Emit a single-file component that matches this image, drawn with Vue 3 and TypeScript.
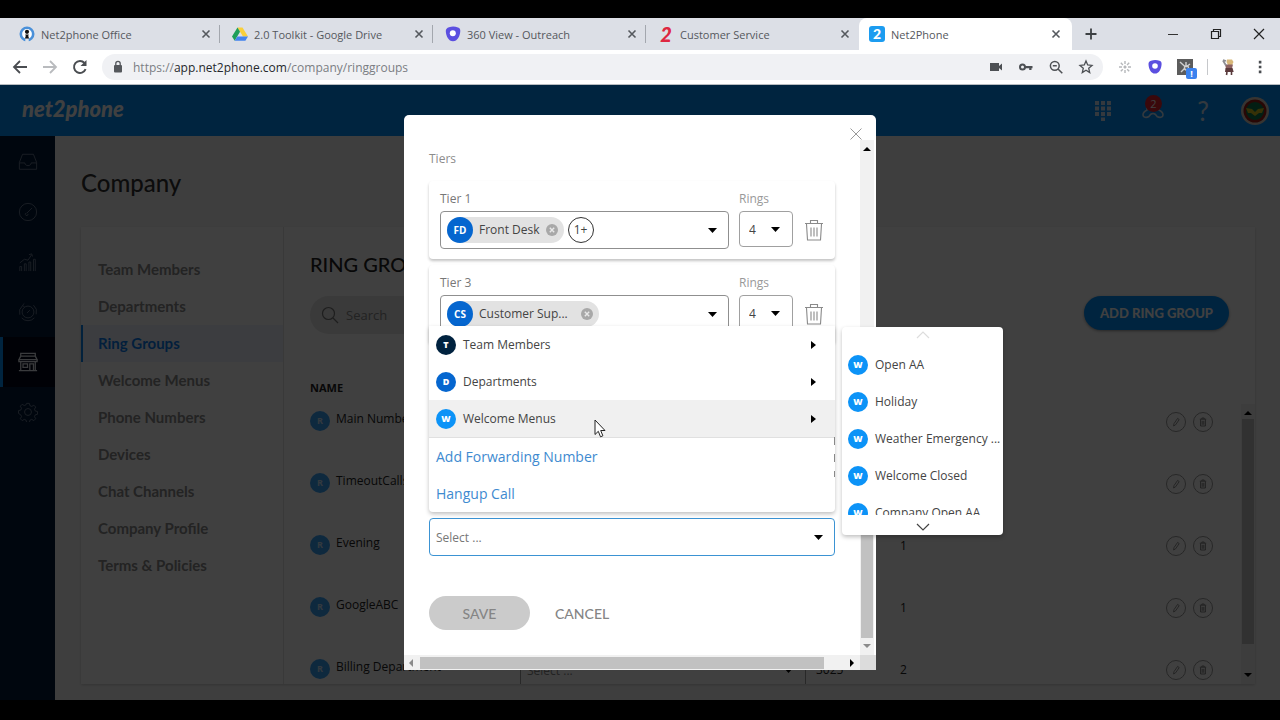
<script setup lang="ts">
interface Tab { title: string; icon: 'office' | 'drive' | 'outreach' | 'service' | 'phone'; active?: boolean }
interface Tier { label: string; initials: string; name: string; extra?: string; rings: string }
interface GroupRow { name: string; ext: string; count: string }
interface MenuItem { letter: string; label: string; tone: string; hover?: boolean }

const tabs: Tab[] = [
  { title: 'Net2phone Office', icon: 'office' },
  { title: '2.0 Toolkit - Google Drive', icon: 'drive' },
  { title: '360 View - Outreach', icon: 'outreach' },
  { title: 'Customer Service', icon: 'service' },
  { title: 'Net2Phone', icon: 'phone', active: true },
]
const rail = ['Inbox', 'Dashboard', 'Reports', 'History', 'Company', 'Settings']
const sections = ['Team Members', 'Departments', 'Ring Groups', 'Welcome Menus', 'Phone Numbers', 'Devices', 'Chat Channels', 'Company Profile', 'Terms & Policies']
const rows: GroupRow[] = [
  { name: 'Main Number', ext: '', count: '' },
  { name: 'TimeoutCalls', ext: '', count: '' },
  { name: 'Evening', ext: '', count: '1' },
  { name: 'GoogleABC', ext: '', count: '1' },
  { name: 'Billing Department', ext: '3025', count: '2' },
]
const tiers: Tier[] = [
  { label: 'Tier 1', initials: 'FD', name: 'Front Desk', extra: '1+', rings: '4' },
  { label: 'Tier 3', initials: 'CS', name: 'Customer Sup...', rings: '4' },
]
const menu: MenuItem[] = [
  { letter: 'T', label: 'Team Members', tone: 'navy' },
  { letter: 'D', label: 'Departments', tone: 'blue' },
  { letter: 'W', label: 'Welcome Menus', tone: 'sky', hover: true },
]
const welcomeMenus = ['Open AA', 'Holiday', 'Weather Emergency ...', 'Welcome Closed', 'Company Open AA']
</script>

<template>
  <div class="screen">
    <header class="browser">
      <div class="tabstrip">
        <div class="tabs">
          <div v-for="t in tabs" :key="t.title" class="tab" :class="{ active: t.active }">
            <svg v-if="t.icon === 'office'" class="fav" viewBox="0 0 16 16"><circle cx="8" cy="8" r="6.2" fill="#fff" stroke="#4a90d9" stroke-width="2.6" /><rect x="6.3" y="10" width="3.4" height="6" fill="#dde1e8" /><circle cx="8" cy="5.8" r="2.1" fill="#111" /><path d="M6.200 8.500h3.600L9.200 10l.9 2.600H5.900L6.800 10z" fill="#111" /></svg>
            <svg v-else-if="t.icon === 'drive'" class="fav" viewBox="0 0 16 16"><path d="M5.500 1.500h5L16 10.500h-5z" fill="#f9cf3a" /><path d="M5.500 1.500 8 5.800 2.700 14.800 0 10.500z" fill="#1e9e5a" /><path d="M5.300 10.500H16l-2.600 4.300H2.700z" fill="#4383ee" /></svg>
            <svg v-else-if="t.icon === 'outreach'" class="fav" viewBox="0 0 16 16"><path d="M4 1.200C7 .3 10 .4 13 1.400c1.700.6 2.400 1.800 2.300 3.600C15 10 12.500 15.300 8 15.300S1 10 .8 5C.7 3.100 2 1.800 4 1.200z" fill="#5b4fe0" /><circle cx="7.800" cy="7.200" r="3" fill="#fff" /></svg>
            <span v-else-if="t.icon === 'service'" class="fav fav-red">2</span>
            <span v-else class="fav fav-blue">2</span>
            <span class="tab-title">{{ t.title }}</span>
            <button class="icon-btn tab-close" :aria-label="'Close ' + t.title"><svg width="10" height="10" viewBox="0 0 10 10"><path d="M1.500 1.500l7 7M8.500 1.500l-7 7" stroke="#55595e" stroke-width="1.600" /></svg></button>
          </div>
        </div>
        <button class="icon-btn plus" aria-label="New tab"><svg width="12" height="12" viewBox="0 0 12 12"><path d="M6 .5v11M.5 6h11" stroke="#3c4043" stroke-width="1.800" /></svg></button>
        <div class="win">
          <button class="icon-btn" aria-label="Minimize"><svg width="12" height="12" viewBox="0 0 12 12"><path d="M1 6.500h10" stroke="#333" /></svg></button>
          <button class="icon-btn" aria-label="Restore"><svg width="12" height="12" viewBox="0 0 12 12"><path d="M1.500 3.500h7v7h-7zM3.500 3.500v-2h7v7h-2" fill="none" stroke="#222" stroke-width="1.200" /></svg></button>
          <button class="icon-btn" aria-label="Close window"><svg width="12" height="12" viewBox="0 0 12 12"><path d="M1 1l10 10M11 1L1 11" stroke="#222" stroke-width="1.200" /></svg></button>
        </div>
      </div>
      <div class="toolbar">
        <div class="nav">
          <button class="icon-btn" aria-label="Back"><svg width="16" height="16" viewBox="0 0 16 16"><path d="M15 8H2.500M8 2L2 8l6 6" fill="none" stroke="#4a4d51" stroke-width="1.800" /></svg></button>
          <button class="icon-btn" aria-label="Forward"><svg width="16" height="16" viewBox="0 0 16 16"><path d="M1 8h12.500M8 2l6 6-6 6" fill="none" stroke="#b9bbbe" stroke-width="1.800" /></svg></button>
          <button class="icon-btn" aria-label="Reload"><svg width="16" height="16" viewBox="0 0 16 16"><path d="M13.600 10.200A6 6 0 1 1 12.500 4" fill="none" stroke="#4a4d51" stroke-width="1.900" /><path d="M14.500 1v6h-6z" fill="#4a4d51" /></svg></button>
        </div>
        <div class="omnibox">
          <svg width="10" height="14" viewBox="0 0 10 14"><rect x="1" y="5" width="8" height="7.500" rx="1" fill="#55585c" /><path d="M2.800 5.500V3.600a2.200 2.200 0 0 1 4.400 0v1.900" fill="none" stroke="#55585c" stroke-width="1.300" /></svg>
          <span class="url">https://<b>app.net2phone.com</b>/company/ringgroups</span>
          <div class="omni-icons">
            <svg width="16" height="16" viewBox="0 0 16 16"><path d="M2 4h9v3l3-2.500v7L11 9v3H2z" fill="#4d5054" /></svg>
            <svg width="16" height="16" viewBox="0 0 16 16"><circle cx="4.500" cy="8" r="2.500" fill="none" stroke="#4d5054" stroke-width="2" /><path d="M7 7h7.500v2.200h-1V11h-2.300V9.200H7z" fill="#4d5054" /></svg>
            <svg width="16" height="16" viewBox="0 0 16 16"><circle cx="6.800" cy="6.800" r="4.400" fill="none" stroke="#4d5054" stroke-width="1.500" /><path d="M10 10l4.300 4.300M4.800 6.800h4" stroke="#4d5054" stroke-width="1.500" /></svg>
            <svg width="16" height="16" viewBox="0 0 16 16"><path d="M8 2l1.700 4 4.300.4-3.300 2.800 1 4.300L8 11.200l-3.700 2.300 1-4.300L2 6.400 6.300 6z" fill="none" stroke="#4d5054" stroke-width="1.300" /></svg>
          </div>
        </div>
        <div class="exts">
          <svg width="16" height="16" viewBox="0 0 16 16"><path d="M8 2v12M2 8h12M3.800 3.800l8.400 8.400M12.200 3.800l-8.400 8.400" stroke="#b5b7ba" stroke-width="1.400" stroke-dasharray="3 1.500" /></svg>
          <svg width="16" height="16" viewBox="0 0 16 16"><path d="M4 1.700C7 .8 10 .9 12.500 1.800c1.700.6 2.200 1.800 2.100 3.400C14.300 10 12 14.600 8 14.600S1.700 10 1.500 5.200C1.400 3.300 2.300 2.200 4 1.700z" fill="#5b4fe0" /><circle cx="8" cy="7" r="2.800" fill="#fff" /></svg>
          <span class="hub">
            <svg width="16" height="16" viewBox="0 0 16 16"><rect width="16" height="16" fill="#5c5c5c" /><path d="M3 3l5.500 5M9 3v5M9 8l4-3M8 9l-4 4" stroke="#d0d0d0" stroke-width="1.400" /><circle cx="9.500" cy="9" r="2" fill="none" stroke="#d0d0d0" stroke-width="1.400" /></svg>
            <i class="hub-badge">!</i>
          </span>
          <span class="vsep"></span>
          <svg class="figure" width="14" height="18" viewBox="0 0 14 18"><path d="M5 1.500h5l1.500 2.500L10 7H6L4.500 4z" fill="#d8b779" /><path d="M3 6.500h8l-1 4H4z" fill="#8d6262" /><path d="M3.500 10h7l1.200 4H3z" fill="#5c3a3c" /><path d="M1 2.500l3 5M1 2l3 1" stroke="#8f8f95" stroke-width="1.800" /><path d="M5 14l-.5 3M9.500 14v3" stroke="#57393a" stroke-width="1.600" /></svg>
          <svg width="4" height="16" viewBox="0 0 4 16"><path d="M.8 1.800h2.600v2.600H.8zM.8 6.700h2.600v2.600H.8zM.8 11.600h2.600v2.600H.8z" fill="#4a4d51" /></svg>
        </div>
      </div>
    </header>

    <div class="page">
      <div class="topbar">
        <span class="logo">net2phone</span>
        <div class="top-icons">
          <button class="icon-btn pad" aria-label="Dial pad"><svg width="16" height="20" viewBox="0 0 16 20"><path d="M0 0h4v4H0zM6 0h4v4H6zM12 0h4v4h-4zM0 5.500h4v4H0zM6 5.500h4v4H6zM12 5.500h4v4h-4zM0 11h4v4H0zM6 11h4v4H6zM12 11h4v4h-4zM6 16.500h4v3.500H6z" fill="#cfe4f7" /></svg></button>
          <button class="icon-btn bell" aria-label="Notifications"><svg width="22" height="16" viewBox="0 0 22 16"><path d="M5 4v3C3 8 1 10 1 12c0 2.500 3.500 3 6 1.500 1-2 2.500-3 4-3s3 1 4 3c2.500 1.500 6 1 6-1.500 0-2-2-4-4-5V4" fill="none" stroke="#cfe4f7" stroke-width="1.600" /></svg><i class="count">2</i></button>
          <button class="icon-btn help" aria-label="Help">?</button>
          <svg width="28" height="28" viewBox="0 0 28 28"><circle cx="14" cy="14" r="14" fill="#d9d0c4" /><circle cx="14" cy="14" r="11.500" fill="#a01e14" /><circle cx="14" cy="14" r="9" fill="#0d7a4c" /><path d="M5 11l6 1 3 3 3-3 6-1-2 5h-3l-4 3-4-3H7z" fill="#d8c21e" /></svg>
        </div>
      </div>

      <div class="body">
        <nav class="rail">
          <button v-for="(r, i) in rail" :key="r" class="rail-btn" :class="{ active: i === 4 }" :aria-label="r">
            <svg v-if="i === 0" viewBox="0 0 22 22"><path d="M5 2.500h12l3.500 9V19h-19v-7.500zM1.500 12h6c0 4 7 4 7 0h6" /></svg>
            <svg v-else-if="i === 1" viewBox="0 0 22 22"><circle cx="11" cy="11" r="9.500" /><path d="M9.500 12.500l6-6M9 12a1.500 1.500 0 1 0 2 1" /></svg>
            <svg v-else-if="i === 2" viewBox="0 0 22 22"><path d="M2 21v-5h2v5M7 21v-8h2v8M12 21V11h2v10M17 21V8h2v13M2 12l5-4 4 1 4-6M12 3l3-1 1 3" /></svg>
            <svg v-else-if="i === 3" viewBox="0 0 22 22"><circle cx="11" cy="11" r="6.500" /><path d="M10 12l3-3M2 14a9.500 9.500 0 0 1 3-10M17 3.500a9.500 9.500 0 0 1 3 10M4 17.500a9.500 9.500 0 0 0 14 0M7 1.500l-2 2 2 2" /></svg>
            <svg v-else-if="i === 4" viewBox="0 0 22 22"><path d="M3 1.500h16v3H3zM3 4.500l-2 4h20l-2-4M1 8.500h20v2H1zM3 10.500V20M19 10.500V20M1 20.500h20M5.500 13h5v4h-5zM13 20v-7h4v7" /></svg>
            <svg v-else viewBox="0 0 22 22"><circle cx="11" cy="11" r="3.800" /><path d="M9.500 1.500h3l.6 2.500 2 .9 2.300-1.400 2.100 2.100-1.400 2.300.9 2 2.500.6v3l-2.500.6-.9 2 1.400 2.300-2.100 2.100-2.300-1.400-2 .9-.6 2.500h-3l-.6-2.500-2-.9-2.300 1.400-2.100-2.100 1.400-2.300-.9-2L.5 12.500v-3L3 8.900l.9-2-1.400-2.300 2.100-2.100 2.300 1.400 2-.9z" /></svg>
          </button>
        </nav>
        <main class="main">
          <h1>Company</h1>
          <div class="panel">
            <nav class="sections">
              <a v-for="s in sections" :key="s" href="#" :class="{ current: s === 'Ring Groups' }">{{ s }}</a>
            </nav>
            <section class="content">
              <h2>RING GROUPS</h2>
              <div class="tools">
                <label class="search">
                  <svg width="18" height="18" viewBox="0 0 18 18"><circle cx="7.500" cy="7.500" r="6" fill="none" stroke="#777" stroke-width="1.200" /><path d="M12 12l5 5" stroke="#777" stroke-width="1.200" /></svg>
                  <input type="text" placeholder="Search" aria-label="Search ring groups" />
                </label>
                <button class="add">ADD RING GROUP</button>
              </div>
              <div class="scroll">
                <div class="clip">
                  <table>
                    <colgroup><col class="c-name" /><col class="c-sel" /><col class="c-ext" /><col class="c-count" /><col /></colgroup>
                    <thead><tr><th>NAME</th><th></th><th></th><th></th><th></th></tr></thead>
                    <tbody>
                      <tr v-for="r in rows" :key="r.name">
                        <td class="name"><div><i class="avatar">R</i><span>{{ r.name }}</span></div></td>
                        <td class="sel"><div class="picker"><select :aria-label="'Members of ' + r.name"><option>Select ...</option></select><svg class="caret" width="9" height="5" viewBox="0 0 9 5"><path d="M0 0h9L4.500 5z" /></svg></div></td>
                        <td class="num">{{ r.ext }}</td>
                        <td class="num">{{ r.count }}</td>
                        <td class="acts">
                          <div>
                            <button class="round" :aria-label="'Edit ' + r.name"><svg width="8" height="10" viewBox="0 0 10 12"><path d="M2 11l.5-3L7 1.500l2 1.500-4.500 6.500z" fill="none" stroke="#777" /></svg></button>
                            <button class="round" :aria-label="'Delete ' + r.name"><svg width="8" height="10" viewBox="0 0 10 12"><path d="M1 2.500h8M3.500 2V1h3v1M2 3v8h6V3M4 4.500v5M6 4.500v5" fill="none" stroke="#666" /></svg></button>
                          </div>
                        </td>
                      </tr>
                    </tbody>
                  </table>
                </div>
                <div class="vbar outer">
                  <svg width="8" height="4" viewBox="0 0 8 4"><path d="M0 4h8L4 0z" /></svg>
                  <span class="thumb"></span>
                  <svg width="8" height="4" viewBox="0 0 8 4"><path d="M0 0h8L4 4z" /></svg>
                </div>
              </div>
            </section>
          </div>
        </main>
      </div>

      <div class="overlay">
        <div class="modal" role="dialog" aria-label="Tiers">
          <div class="modal-head">
            <button class="icon-btn" aria-label="Close"><svg width="12" height="12" viewBox="0 0 12 12"><path d="M.5.5l11 11M11.500.5l-11 11" stroke="#999" /></svg></button>
          </div>
          <div class="modal-mid">
            <div class="form">
              <p class="tiers-title">Tiers</p>
              <div v-for="t in tiers" :key="t.label" class="tier">
                <div class="tier-main">
                  <span class="lbl">{{ t.label }}</span>
                  <button class="combo" :aria-label="t.label + ' members'">
                    <span class="chip" :class="{ long: !t.extra }"><i class="initials">{{ t.initials }}</i><span>{{ t.name }}</span>
                      <svg width="12" height="12" viewBox="0 0 12 12"><circle cx="6" cy="6" r="6" fill="#a8a8a8" /><path d="M3.800 3.800l4.400 4.400M8.200 3.800L3.800 8.200" stroke="#e8e8e8" stroke-width="1.400" /></svg>
                    </span>
                    <span v-if="t.extra" class="extra">{{ t.extra }}</span>
                    <svg class="caret" width="9" height="5" viewBox="0 0 9 5"><path d="M0 0h9L4.500 5z" /></svg>
                  </button>
                </div>
                <label class="rings">
                  <span class="lbl light">Rings</span>
                  <span class="picker"><select><option>{{ t.rings }}</option></select><svg class="caret" width="9" height="5" viewBox="0 0 9 5"><path d="M0 0h9L4.500 5z" /></svg></span>
                </label>
                <button class="icon-btn trash" :aria-label="'Delete ' + t.label"><svg width="20" height="22" viewBox="0 0 20 22"><path d="M1 4.500h18M6.500 4V1.500h7V4M2.500 5l1 16h13l1-16M7 8.500v9M10 8.500v9M13 8.500v9" fill="none" stroke="#8a8a8a" stroke-width="1.100" /></svg></button>
              </div>

              <div class="field">
                <div class="menu">
                  <button v-for="m in menu" :key="m.label" class="item" :class="{ hover: m.hover }">
                    <i class="dot" :class="m.tone">{{ m.letter }}</i><span>{{ m.label }}</span>
                    <svg width="5" height="8" viewBox="0 0 5 8"><path d="M0 0v8l5-4z" /></svg>
                  </button>
                  <a href="#">Add Forwarding Number</a>
                  <a href="#">Hangup Call</a>
                  <svg class="cursor" width="12" height="20" viewBox="0 0 12 20"><path d="M1 1v14.500l3.300-3.200 2.200 5.500 2.400-1-2.200-5.300H11z" fill="#fff" stroke="#222" /></svg>
                  <div class="flyout">
                    <svg class="chev faint" width="14" height="8" viewBox="0 0 14 8"><path d="M1 7l6-6 6 6" /></svg>
                    <div class="fly-list">
                      <button v-for="w in welcomeMenus" :key="w" class="fly-item"><i class="dot sky">W</i><span>{{ w }}</span></button>
                    </div>
                    <svg class="chev" width="14" height="8" viewBox="0 0 14 8"><path d="M1 1l6 6 6-6" /></svg>
                  </div>
                </div>
                <input type="text" placeholder="Select ..." aria-label="Destination" />
                <svg class="caret" width="9" height="5" viewBox="0 0 9 5"><path d="M0 0h9L4.500 5z" /></svg>
              </div>

              <div class="actions">
                <button class="save">SAVE</button>
                <button class="cancel">CANCEL</button>
              </div>
            </div>
            <div class="vbar inner">
              <svg width="8" height="4" viewBox="0 0 8 4"><path d="M0 4h8L4 0z" /></svg>
              <span class="thumb"></span>
              <svg class="off" width="8" height="4" viewBox="0 0 8 4"><path d="M0 0h8L4 4z" /></svg>
            </div>
          </div>
          <div class="hbar">
            <svg class="off" width="4" height="8" viewBox="0 0 4 8"><path d="M4 0v8L0 4z" /></svg>
            <span class="thumb"></span>
            <svg width="4" height="8" viewBox="0 0 4 8"><path d="M0 0v8l4-4z" /></svg>
            <span class="corner"></span>
          </div>
        </div>
      </div>
    </div>
  </div>
</template>

<style>
body { margin: 0; background: #000; }
</style>

<style scoped>
* { box-sizing: border-box; }
.screen { height: 100vh; min-height: 700px; padding: 18px 0 20px; background: #000; display: flex; flex-direction: column; font-family: "Open Sans", "Noto Sans", sans-serif; font-size: 12px; color: #444; overflow: hidden; }
button, input, select { font: inherit; color: inherit; }
button { background: none; border: 0; padding: 0; cursor: pointer; }
svg { display: block; flex: none; }
i { font-style: normal; }
.icon-btn { display: flex; align-items: center; justify-content: center; }

/* browser chrome */
.browser { flex: none; background: #fff; border-bottom: 1px solid #b8bcc0; }
.tabstrip { display: flex; align-items: center; height: 32px; background: #dcdfe6; padding-left: 7px; }
.tabs { display: flex; flex: 0 1 1065px; align-self: stretch; min-width: 0; }
.tab { flex: 0 1 213px; display: flex; align-items: center; gap: 6px; padding: 0 9px 0 12px; min-width: 0; position: relative; }
.tab:not(.active):not(:nth-child(4))::after { content: ""; position: absolute; right: 0; top: 7px; height: 18px; width: 1px; background: #a3a7ae; }
.tab.active { background: #fff; border-radius: 8px 8px 0 0; padding-left: 10px; padding-right: 11px; }
.fav { flex: none; width: 16px; height: 16px; line-height: 16px; text-align: center; font-family: Lato, sans-serif; font-weight: 900; }
.fav-red { color: #de2740; font-size: 20px; font-style: italic; }
.fav-blue { background: #1c9cf0; color: #fff; font-size: 14px; border-radius: 3px; }
.tab-title { flex: 1; font-size: 11px; color: #55585d; white-space: nowrap; overflow: hidden; }
.plus { margin-left: 13px; }
.win { margin-left: auto; display: flex; padding-right: 15px; gap: 31px; height: 28px; align-items: center; }
.toolbar { display: flex; align-items: center; height: 34px; }
.nav { display: flex; gap: 14px; padding: 0 14px 0 12px; }
.omnibox { flex: 1; display: flex; align-items: center; height: 26px; border-radius: 13px; background: #f0f1f4; padding: 0 9px 0 11px; }
.url { margin-left: 10px; font-size: 12px; color: #7b7e83; white-space: nowrap; }
.url b { font-weight: 400; color: #25282c; }
.omni-icons { margin-left: auto; display: flex; gap: 14px; }
.exts { display: flex; align-items: center; gap: 14px; padding: 0 18px 0 14px; }
.hub { position: relative; }
.hub-badge { position: absolute; left: 9px; top: 9px; width: 11px; height: 11px; border-radius: 2px; background: #3b82ee; color: #fff; font-size: 9px; line-height: 11px; text-align: center; font-weight: 700; }
.vsep { width: 1px; height: 16px; background: #c6c8cb; }
.figure { margin-right: 8px; }

/* application */
.page { position: relative; flex: 1; min-height: 0; display: flex; flex-direction: column; background: #f8f8f8; }
.topbar { flex: none; height: 51px; background: #0090fc; display: flex; align-items: center; justify-content: space-between; padding: 0 11px 0 22px; }
.logo { font-family: Lato, sans-serif; font-weight: 900; font-style: italic; font-size: 22px; line-height: 24px; color: #fff; margin-bottom: 4px; }
.top-icons { display: flex; align-items: center; gap: 26px; }
.pad, .bell { width: 24px; }
.bell { position: relative; }
.count { position: absolute; left: 4px; top: -8px; width: 17px; height: 17px; border-radius: 9px; background: #e5202c; color: #fff; font-size: 11px; line-height: 17px; text-align: center; }
.help { width: 24px; font-family: Lato, sans-serif; font-size: 26px; line-height: 28px; color: #cfe4f7; }
.body { flex: 1; display: flex; min-height: 0; }
.rail { flex: none; width: 55px; background: #001838; padding-top: 1px; }
.rail-btn { display: flex; align-items: center; justify-content: center; width: 55px; height: 50px; border-left: 3px solid transparent; padding-right: 3px; }
.rail-btn svg { width: 20px; height: 20px; fill: none; stroke: #6d7d94; stroke-width: 1; }
.rail-btn.active { background: #000618; border-left-color: #0090fc; }
.rail-btn.active svg { stroke: #e8ecf2; stroke-width: 1.400; }
.main { flex: 1; min-width: 0; display: flex; flex-direction: column; padding: 29px 25px 16px 26px; }
h1 { margin: 0 0 26px; font-family: Lato, sans-serif; font-weight: 500; font-size: 24px; line-height: 36px; color: #333; }
.panel { flex: 1; min-height: 0; display: flex; background: #fff; box-shadow: 0 1px 3px rgba(0, 0, 0, .18); }
.sections { flex: none; width: 203px; padding-top: 24px; border-right: 1px solid #e2e2e2; }
.sections a { display: block; height: 37px; line-height: 37px; padding-left: 15px; border-left: 2px solid transparent; font-family: Lato, sans-serif; font-weight: 700; font-size: 15px; color: #8c8c8c; text-decoration: none; }
.sections a.current { background: #f0f4fd; border-left-color: #0a84f0; color: #0a7cf0; }
.content { flex: 1; min-width: 0; display: flex; flex-direction: column; padding-left: 26px; }
h2 { margin: 24px 0 19px; font-family: Lato, sans-serif; font-weight: 500; font-size: 20px; line-height: 26px; color: #222; }
.tools { display: flex; justify-content: space-between; padding-right: 26px; }
.search { display: flex; align-items: center; gap: 7px; width: 250px; height: 38px; padding-left: 11px; border-radius: 19px; background: #e6e6e6; }
.search input { border: 0; background: none; outline: 0; min-width: 0; flex: 1; font-size: 13px; padding: 0; }
.search input::placeholder { color: #8a8a8a; opacity: 1; }
.add { height: 34px; padding: 0 16px; border-radius: 17px; background: #0090fc; color: #fff; font-family: Lato, sans-serif; font-weight: 900; font-size: 13px; box-shadow: 0 1px 3px rgba(0, 0, 0, .4); }
.scroll { flex: 1; min-height: 0; margin-top: 38px; display: flex; }
.clip { flex: 1; min-width: 0; overflow: hidden; }
table { width: 100%; border-collapse: collapse; table-layout: fixed; color: #222; }
.c-name { width: 210px; } .c-sel { width: 296px; } .c-ext { width: 84px; } .c-count { width: 84px; }
th { height: 31px; padding: 0; text-align: left; font-size: 11px; font-weight: 700; }
td { height: 62px; padding: 9px 0 0; vertical-align: top; line-height: 20px; }
td.name { padding-top: 6px; }
td.name div { display: flex; gap: 6px; }
td.name span { white-space: nowrap; }
.avatar { width: 20px; height: 20px; margin-top: 2px; border-radius: 10px; background: #3ba3f8; color: #cfe6fb; font-size: 9px; font-weight: 700; text-align: center; }
td.sel { padding-top: 1px; }
td.sel .picker { width: 286px; height: 38px; }
td.acts div { display: flex; justify-content: flex-end; gap: 7px; padding-right: 28px; }
.round { width: 20px; height: 20px; border: 1px solid #9a9a9a; border-radius: 10px; display: flex; align-items: center; justify-content: center; }
.picker { position: relative; display: block; }
.picker select { appearance: none; width: 100%; height: 100%; border: 1px solid #a0a0a0; border-radius: 4px; background: #fff; padding: 0 9px; outline: 0; }
td .picker select { padding: 0 6px; color: #888; }
.picker .caret { position: absolute; right: 13px; top: 16px; pointer-events: none; }
.caret { fill: #000; }
.vbar { flex: none; display: flex; flex-direction: column; align-items: center; background: #f1f1f1; width: 14px; padding: 7px 0; }
.vbar .thumb { width: 12px; background: #c1c1c1; }
.outer { margin-top: 32px; }
.outer .thumb { flex: 1; margin: 4px 0 29px; }
.off { fill: #8b8b8b; }

/* dialog */
.overlay { position: absolute; inset: 0; background: rgba(0, 0, 0, .75); display: flex; justify-content: center; padding: 30px 16px; }
.modal { width: 472px; display: flex; flex-direction: column; background: #fff; border-radius: 5px; }
.modal-head { flex: none; height: 25px; display: flex; align-items: center; justify-content: flex-end; padding: 12px 14px 0 0; }
.modal-mid { flex: 1; min-height: 0; display: flex; padding-right: 2px; }
.form { flex: 1; min-width: 0; padding: 9px 25px 0 25px; }
.tiers-title { margin: 0 0 12px; line-height: 20px; color: #8c8c8c; }
.tier { display: flex; align-items: flex-start; height: 78px; margin-bottom: 6px; padding: 9px 11px 0; border-radius: 4px; box-shadow: 0 2px 3px rgba(0, 0, 0, .24); background: #fff; }
.tier-main { flex: 1; min-width: 0; }
.lbl { display: block; line-height: 18px; margin-bottom: 3px; color: #777; }
.light { color: #999; }
.combo { display: flex; align-items: center; width: 100%; height: 38px; border: 1px solid #8f8f8f; border-radius: 4px; padding: 0 11px 0 6px; }
.combo .caret { margin-left: auto; }
.chip { display: flex; align-items: center; gap: 6px; height: 26px; border-radius: 13px; background: #e2e2e2; padding-right: 6px; }
.chip > span { margin-bottom: 2px; }
.chip.long > svg { margin-left: 7px; }
.initials { width: 26px; height: 26px; border-radius: 13px; background: #0566cf; color: #fff; font-size: 10px; font-weight: 700; line-height: 26px; text-align: center; }
.extra { width: 26px; height: 26px; margin-left: 4px; border: 1px solid #333; border-radius: 13px; line-height: 24px; }
.rings { width: 54px; margin-left: 10px; }
.rings .picker { height: 36px; }
.trash { margin: 29px 0 0 11px; }
.field { position: relative; display: flex; align-items: center; margin-top: 175px; }
.field input { width: 100%; height: 38px; border: 1px solid #3b93d3; border-radius: 4px; padding: 0 6px; outline: 0; background: #fff; }
.field input::placeholder { color: #777; opacity: 1; }
.field > .caret { position: absolute; right: 12px; }
.menu { position: absolute; left: 0; right: 0; bottom: calc(100% + 6px); z-index: 2; background: #fff; border-radius: 0 0 4px 4px; box-shadow: 0 2px 4px rgba(0, 0, 0, .25); }
.menu::after { content: ""; position: absolute; right: 0; top: 111px; width: 1px; height: 40px; background: repeating-linear-gradient(#888 0 8px, #fff 8px 17px); }
.item { display: flex; align-items: center; width: 100%; height: 37px; padding: 0 19px 0 7px; gap: 7px; }
.item > svg { margin-left: auto; }
.item.hover { height: 38px; background: #f0f0f0; border-bottom: 1px solid #e0e0e0; }
.dot { flex: none; width: 20px; height: 20px; border-radius: 10px; color: #fff; font-size: 9px; font-weight: 800; line-height: 20px; text-align: center; }
.navy { background: #00223f; } .blue { background: #0566cf; } .sky { background: #0c93f7; }
.menu a { display: block; height: 37px; line-height: 37px; padding-left: 7px; font-size: 14px; color: #3e8ad0; text-decoration: none; }
.cursor { position: absolute; left: 165px; top: 93px; }
.flyout { position: absolute; left: calc(100% + 7px); top: 1px; width: 161px; height: 208px; display: flex; flex-direction: column; align-items: center; padding: 4px 0; background: #fff; border-radius: 4px; box-shadow: 0 2px 4px rgba(0, 0, 0, .25); }
.fly-list { width: 100%; height: 169px; margin: 7px 0 8px; overflow: hidden; }
.fly-item { display: flex; align-items: center; gap: 7px; width: 100%; height: 37px; padding: 0 0 0 6px; text-align: left; }
.fly-item span { white-space: nowrap; }
.chev { fill: none; stroke: #444; stroke-width: 1.200; }
.chev.faint { stroke: #ddd; }
.actions { display: flex; gap: 25px; margin-top: 40px; font-family: Lato, sans-serif; color: #858585; }
.save, .cancel { height: 34px; font-size: 14px; font-weight: 500; }
.save { width: 101px; border-radius: 17px; background: #cbcbcb; }
.inner { justify-content: space-between; }
.inner .thumb { height: 228px; margin: auto 0 6px; }
.hbar { flex: none; height: 15px; display: flex; align-items: center; background: #f1f1f1; padding-left: 5px; }
.hbar .thumb { flex: 1; height: 12px; margin: 0 26px 0 7px; background: #c1c1c1; }
.corner { width: 16px; height: 15px; margin-left: 6px; background: #dcdcdc; }
</style>
